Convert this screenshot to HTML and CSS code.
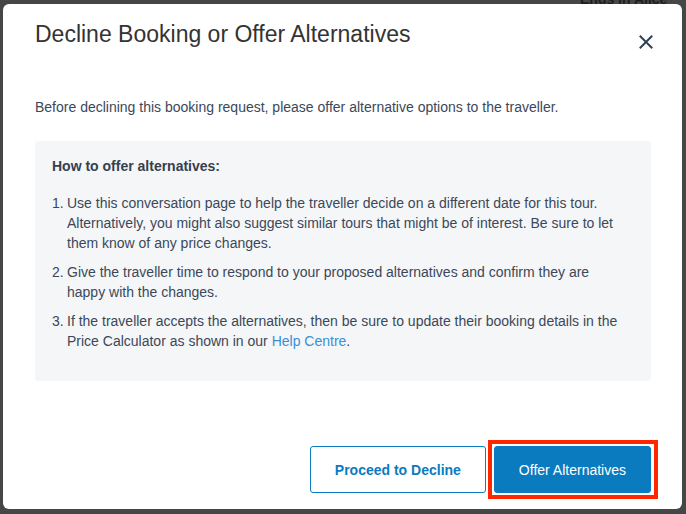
FILE: index.html
```html
<!DOCTYPE html>
<html lang="en">
<head>
<meta charset="utf-8">
<title>Decline Booking or Offer Alternatives</title>
<link rel="stylesheet" href="styles.css">
</head>
<body>
<div class="backdrop">
  <div class="behind-text">Ends in Alice Sp</div>
  <div class="modal" role="dialog" aria-labelledby="modal-title">
    <div class="modal-header">
      <h1 id="modal-title" class="modal-title">Decline Booking or Offer Alternatives</h1>
      <button class="close-btn" aria-label="Close">
        <svg width="14" height="14" viewBox="0 0 14 14"><path d="M1.5 1.5 L12.5 12.5 M12.5 1.5 L1.5 12.5" stroke="#2f4256" stroke-width="2" stroke-linecap="square" fill="none"/></svg>
      </button>
    </div>
    <p class="intro">Before declining this booking request, please offer alternative options to the traveller.</p>
    <div class="tips">
      <h2 class="tips-title">How to offer alternatives:</h2>
      <ol class="tips-list">
        <li><span class="tip-text">Use this conversation page to help the traveller decide on a different date for this tour. Alternatively, you might also suggest similar tours that might be of interest. Be sure to let them know of any price changes.</span></li>
        <li><span class="tip-text">Give the traveller time to respond to your proposed alternatives and confirm they are happy with the changes.</span></li>
        <li><span class="tip-text">If the traveller accepts the alternatives, then be sure to update their booking details in the Price Calculator as shown in our <a href="#" class="link">Help Centre</a>.</span></li>
      </ol>
    </div>
    <div class="modal-footer">
      <button class="btn btn-outline">Proceed to Decline</button>
      <button class="btn btn-primary highlighted">Offer Alternatives</button>
    </div>
  </div>
</div>
</body>
</html>
```
FILE: styles.css
```css
* { box-sizing: border-box; }
html, body { margin: 0; padding: 0; }
body {
  width: 686px;
  height: 514px;
  overflow: hidden;
  background: #464646;
  font-family: "Liberation Sans", Arial, Helvetica, sans-serif;
}
.backdrop {
  position: relative;
  width: 686px;
  height: 514px;
  padding: 4px 0 0 3px;
}
.behind-text {
  position: absolute;
  top: -9px;
  left: 580px;
  font-size: 14px;
  font-weight: bold;
  color: #1e1e1e;
}
.modal {
  position: relative;
  width: 679px;
  height: 505px;
  background: #fff;
  border-radius: 6px;
  padding: 16px 31px 16px 32px;
  display: flex;
  flex-direction: column;
}
.modal-header {
  display: flex;
  justify-content: space-between;
  align-items: center;
  height: 28px;
}
.modal-title {
  margin: 0;
  font-size: 23px;
  line-height: 28px;
  font-weight: normal;
  color: #333;
}
.close-btn {
  border: 0;
  background: none;
  padding: 0;
  width: 14px;
  height: 14px;
  margin-right: -2px;
  margin-top: 15px;
  display: flex;
}
.intro {
  margin: 49px 0 0;
  font-size: 14px;
  line-height: 20px;
  color: #3b4859;
}
.tips {
  margin-top: 24px;
  background: #f5f6f8;
  border-radius: 3px;
  padding: 15px 24px 30px 17px;
  color: #3b4859;
}
.tips-title {
  margin: 0;
  font-size: 14px;
  line-height: 20px;
  font-weight: bold;
  color: #34414f;
}
.tips-list {
  list-style: none;
  margin: 17px 0 0;
  padding: 0;
  counter-reset: tip;
  font-size: 14px;
  line-height: 20px;
}
.tips-list li {
  counter-increment: tip;
  display: flex;
  margin-bottom: 9px;
}
.tips-list li:last-child { margin-bottom: 0; }
.tips-list li::before {
  content: counter(tip) ".";
  flex: 0 0 15px;
}
.tip-text {
  flex: 1;
}
.link {
  color: #3a8fd5;
  text-decoration: none;
}
.modal-footer {
  margin-top: auto;
  display: flex;
  justify-content: flex-end;
  gap: 8px;
}
.btn {
  height: 47px;
  padding: 0 24px;
  font-family: inherit;
  font-size: 14px;
  border-radius: 3px;
  border: 1px solid #0b7bbf;
}
.btn-outline {
  background: #fff;
  color: #0b7bbf;
  font-weight: bold;
}
.btn-primary {
  background: #0b7bbf;
  color: #fff;
  font-weight: normal;
}
.highlighted {
  position: relative;
}
.highlighted::after {
  content: "";
  position: absolute;
  top: -7px;
  bottom: -7px;
  left: -7px;
  right: -8px;
  border: 4px solid #ff2600;
  pointer-events: none;
}
```
